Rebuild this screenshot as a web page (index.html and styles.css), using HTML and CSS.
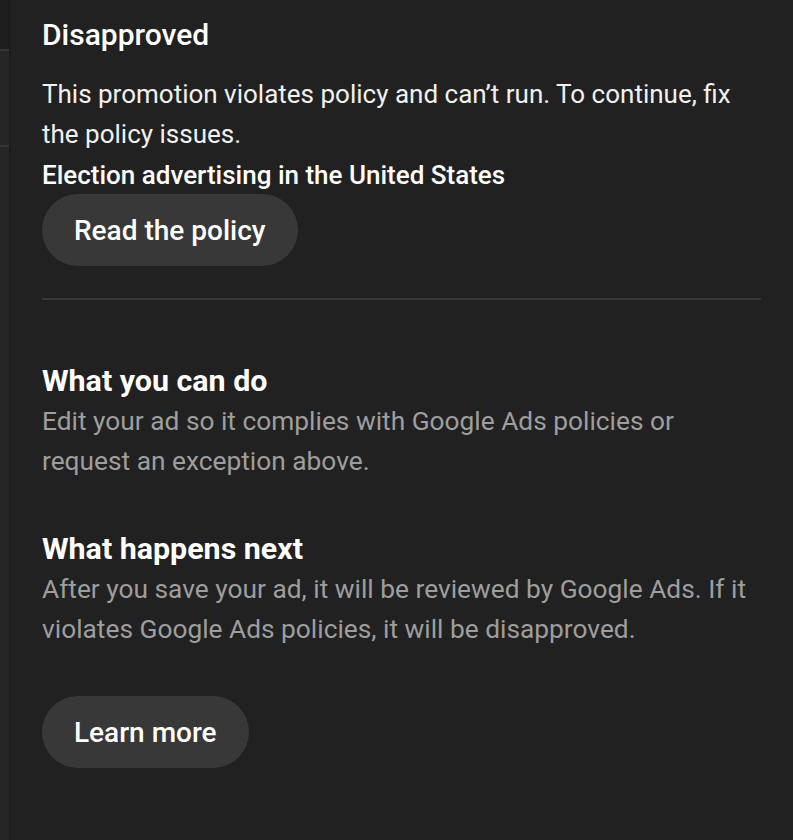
FILE: index.html
```html
<!DOCTYPE html>
<html lang="en">
<head>
<meta charset="utf-8">
<title>Disapproved</title>
<link rel="stylesheet" href="styles.css">
</head>
<body>
<div class="layout">
  <div class="side">
    <div class="side-top"></div>
    <div class="side-mid"></div>
    <div class="side-bottom"></div>
  </div>
  <main class="panel">
    <h2 class="status">Disapproved</h2>
    <p class="desc">This promotion violates policy and can’t run. To continue, fix the policy issues.</p>
    <p class="policy-name">Election advertising in the United States</p>
    <button class="pill">Read the policy</button>
    <hr class="divider">
    <section class="info">
      <h3 class="info-title">What you can do</h3>
      <p class="info-text">Edit your ad so it complies with Google Ads policies or request an exception above.</p>
    </section>
    <section class="info">
      <h3 class="info-title">What happens next</h3>
      <p class="info-text">After you save your ad, it will be reviewed by Google Ads. If it violates Google Ads policies, it will be disapproved.</p>
    </section>
    <button class="pill pill-last">Learn more</button>
  </main>
</div>
</body>
</html>
```
FILE: styles.css
```css
* { box-sizing: border-box; }
html, body {
  margin: 0;
  padding: 0;
  background: #212121;
  height: 100%;
}
body {
  font-family: Roboto, "Liberation Sans", sans-serif;
  color: #f1f1f1;
  overflow: hidden;
}
.layout {
  display: flex;
  min-height: 840px;
}
.side {
  width: 9px;
  flex: none;
  display: flex;
  flex-direction: column;
  box-shadow: 1px 0 2px rgba(0,0,0,0.25);
}
.side-top {
  height: 51px;
  background: #1e1e1e;
  border-bottom: 2px solid #363636;
}
.side-mid {
  height: 96px;
  background: #262626;
  border-bottom: 2px solid #363636;
}
.side-bottom {
  flex: 1;
  background: #262626;
}
.panel {
  flex: 1;
  padding: 15px 32px 0 33px;
}
.status {
  margin: 0;
  font-size: 30px;
  line-height: 40px;
  font-weight: 500;
  color: #ffffff;
}
.desc {
  margin: 19px 0 0;
  font-size: 26px;
  line-height: 40px;
  font-weight: 400;
}
.policy-name {
  margin: 1px 0 0;
  font-size: 26px;
  line-height: 40px;
  font-weight: 500;
  color: #ffffff;
}
.pill {
  display: block;
  margin: -1px 0 0;
  height: 72px;
  padding: 0 32px;
  border: none;
  border-radius: 36px;
  background: #383838;
  color: #ffffff;
  font-family: Roboto, "Liberation Sans", sans-serif;
  font-size: 28px;
  font-weight: 500;
}
.divider {
  margin: 32px 0 0;
  border: none;
  height: 2px;
  background: #383838;
}
.info {
  margin-top: 61px;
}
.info + .info {
  margin-top: 48px;
}
.info-title {
  margin: 0;
  font-size: 30.4px;
  line-height: 40px;
  font-weight: 700;
  color: #ffffff;
}
.info-text {
  margin: 0;
  font-size: 26.3px;
  line-height: 40px;
  color: #9e9e9e;
}
.pill-last {
  margin-top: 47px;
}
```
